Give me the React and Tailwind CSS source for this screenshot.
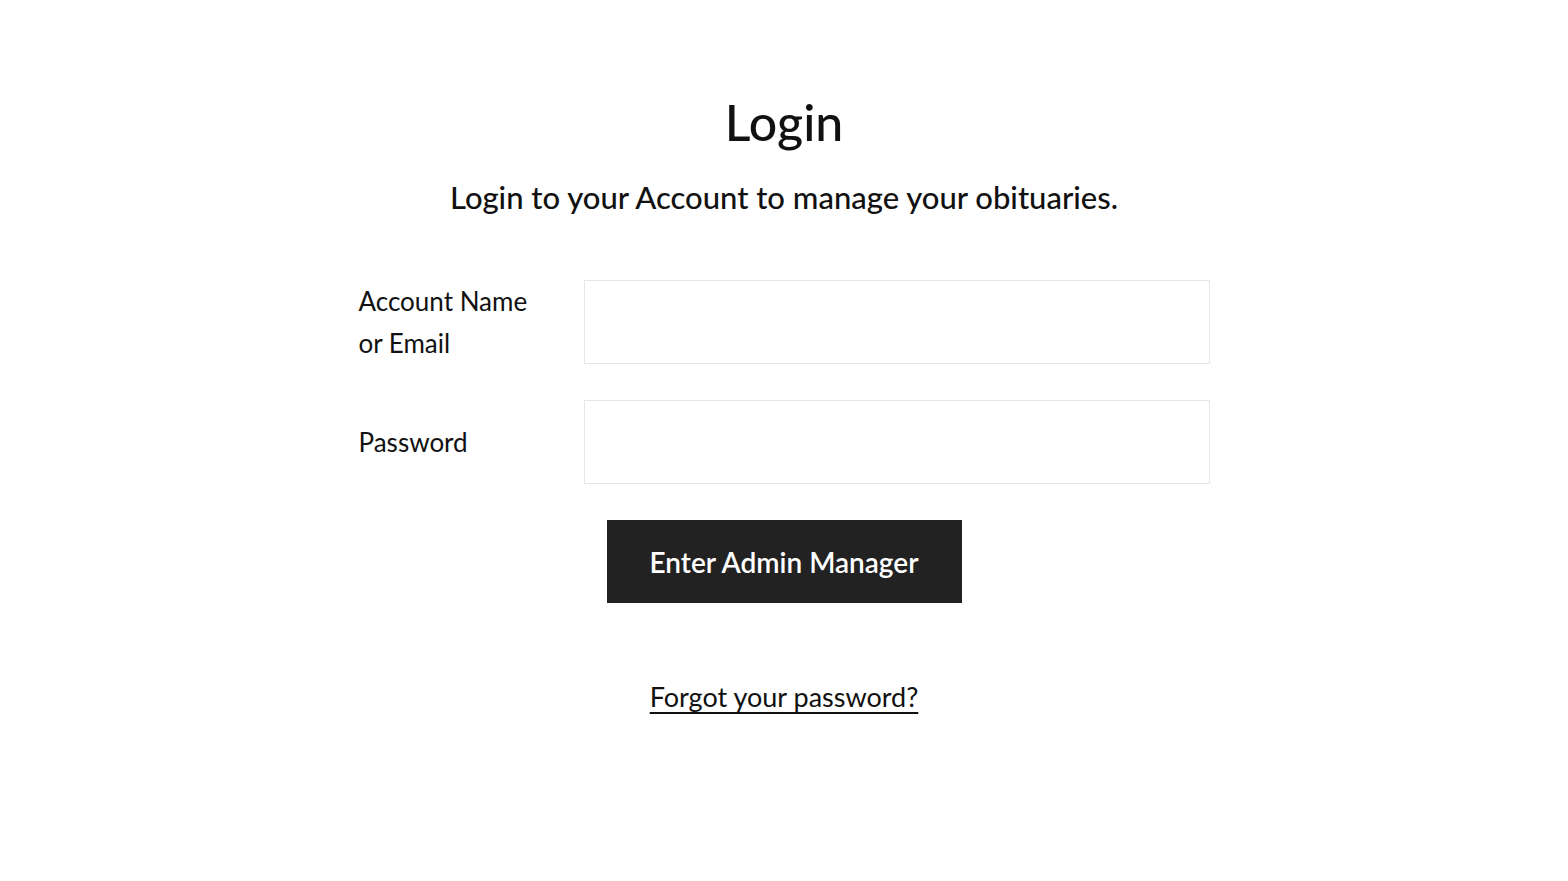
export default function App() {
  return (
    <div className="min-h-[881px] w-full bg-white text-[#111]" style={{ fontFamily: "Lato, 'Open Sans', sans-serif" }}>
      <div className="flex flex-col items-center pt-[92px]">
        <h1 className="text-[50px] font-medium leading-[60px] text-[#111]">Login</h1>
        <p className="mt-[25px] text-[31px] font-medium leading-[40px]">Login to your Account to manage your obituaries.</p>
        <form className="mt-[63px] flex w-[851px] flex-col">
          <div className="flex items-start">
            <label className="w-[225px] text-[26px] leading-[42px]">Account Name<br />or Email</label>
            <input className="h-[84px] w-[626px] border border-[#e6e6e6] bg-white outline-none" />
          </div>
          <div className="mt-[36px] flex items-center">
            <label className="w-[225px] text-[26px] leading-[42px]">Password</label>
            <input type="password" className="h-[84px] w-[626px] border border-[#e6e6e6] bg-white outline-none" />
          </div>
        </form>
        <button className="mt-[36px] h-[83px] w-[355px] bg-[#222222] text-[28px] font-semibold text-white">Enter Admin Manager</button>
        <a href="#" className="mt-[76px] text-[27px] leading-[36px] text-[#111] underline underline-offset-[5px]">Forgot your password?</a>
      </div>
    </div>
  );
}
